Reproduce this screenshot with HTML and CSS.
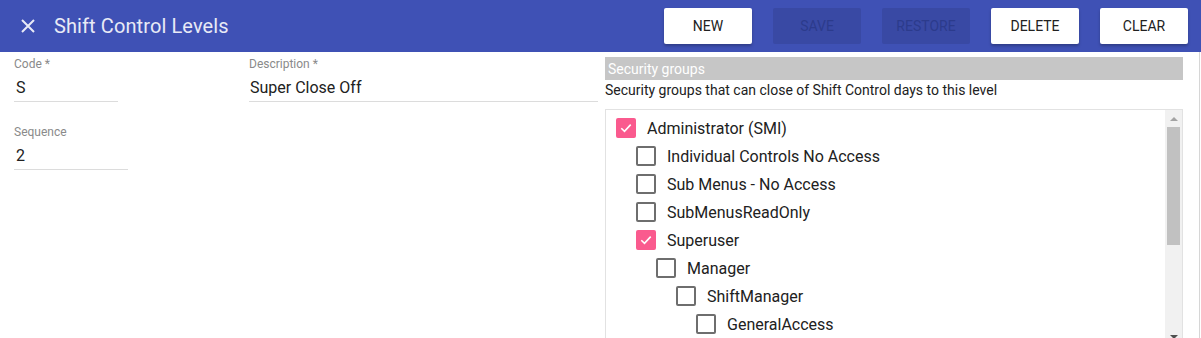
FILE: index.html
```html
<!DOCTYPE html>
<html lang="en">
<head>
<meta charset="utf-8">
<title>Shift Control Levels</title>
<link rel="stylesheet" href="styles.css">
</head>
<body>
<header class="toolbar">
  <button class="close-btn" aria-label="Close">
    <svg width="14" height="14" viewBox="0 0 14 14"><path d="M1 1L13 13M13 1L1 13" stroke="currentColor" stroke-width="2" fill="none"/></svg>
  </button>
  <h1 class="title">Shift Control Levels</h1>
  <div class="actions">
    <button class="btn">New</button>
    <button class="btn btn-disabled">Save</button>
    <button class="btn btn-disabled">Restore</button>
    <button class="btn">Delete</button>
    <button class="btn">Clear</button>
  </div>
</header>
<main class="content">
  <div class="col col-left">
    <div class="field field-code">
      <div class="label">Code *</div>
      <div class="value">S</div>
    </div>
    <div class="field field-seq">
      <div class="label">Sequence</div>
      <div class="value">2</div>
    </div>
  </div>
  <div class="col col-mid">
    <div class="field field-desc">
      <div class="label">Description *</div>
      <div class="value">Super Close Off</div>
    </div>
  </div>
  <section class="security">
    <div class="sec-bar">Security groups</div>
    <div class="sec-desc">Security groups that can close of Shift Control days to this level</div>
    <div class="sec-box">
      <ul class="tree">
        <li class="item lvl0"><span class="cb checked"><svg width="14" height="14" viewBox="0 0 14 14"><path d="M2.3 7.2L5.5 10.3L11.7 3.6" stroke="#fff" stroke-width="1.6" fill="none"/></svg></span>Administrator (SMI)</li>
        <li class="item lvl1"><span class="cb"></span>Individual Controls No Access</li>
        <li class="item lvl1"><span class="cb"></span>Sub Menus - No Access</li>
        <li class="item lvl1"><span class="cb"></span>SubMenusReadOnly</li>
        <li class="item lvl1"><span class="cb checked"><svg width="14" height="14" viewBox="0 0 14 14"><path d="M2.3 7.2L5.5 10.3L11.7 3.6" stroke="#fff" stroke-width="1.6" fill="none"/></svg></span>Superuser</li>
        <li class="item lvl2"><span class="cb"></span>Manager</li>
        <li class="item lvl3"><span class="cb"></span>ShiftManager</li>
        <li class="item lvl4"><span class="cb"></span>GeneralAccess</li>
      </ul>
      <div class="scrollbar">
        <div class="sb-arrow sb-up"></div>
        <div class="sb-track"><div class="sb-thumb"></div></div>
        <div class="sb-arrow sb-down"></div>
      </div>
    </div>
  </section>
</main>
</body>
</html>
```
FILE: styles.css
```css
* { box-sizing: border-box; }
html, body { margin: 0; padding: 0; }
body {
  font-family: Roboto, "Noto Sans", Arial, sans-serif;
  color: #212121;
  background: #fff;
  width: 1201px;
  height: 338px;
  overflow: hidden;
}
.toolbar {
  height: 52px;
  background: #3f51b5;
  display: flex;
  align-items: center;
  padding-left: 21px;
  padding-right: 13px;
}
.close-btn {
  background: none;
  border: 0;
  padding: 0;
  width: 14px;
  height: 14px;
  color: #e8eaf6;
  display: flex;
  cursor: pointer;
}
.title {
  margin: 0 0 0 19px;
  font-size: 20px;
  font-weight: 400;
  color: #e8eaf6;
  letter-spacing: 0.1px;
}
.actions {
  margin-left: auto;
  display: flex;
  gap: 21px;
}
.btn {
  width: 88px;
  height: 36px;
  border: 0;
  border-radius: 2px;
  background: #fff;
  color: #212121;
  font-family: Roboto, Arial, sans-serif;
  font-size: 14px;
  font-weight: 400;
  text-transform: uppercase;
  box-shadow: 0 2px 3px rgba(0,0,0,0.25);
  padding: 0;
}
.btn-disabled {
  background: #3949a4;
  color: #2c3b8c;
  box-shadow: none;
}
.content {
  width: 1200px;
  height: 286px;
  border-right: 1px solid #d6d6d6;
  display: grid;
  grid-template-columns: 235px 356px 578px;
  padding-left: 14px;
  align-items: start;
}
.field { display: flex; flex-direction: column; }
.label {
  font-size: 12px;
  line-height: 14px;
  color: #8a8a8a;
  margin-top: 5px;
}
.value {
  font-size: 16px;
  line-height: 24px;
  margin-top: 5px;
  padding-left: 2px;
  padding-bottom: 1px;
  border-bottom: 1px solid #dcdcdc;
}
.field-code { width: 104px; }
.field-seq { width: 114px; margin-top: 18px; }
.field-desc { width: 349px; }
.field-desc .value { padding-left: 1px; }
.security { padding-top: 5px; }
.sec-bar {
  height: 23px;
  background: #c6c6c6;
  color: #fff;
  font-size: 14px;
  line-height: 24px;
  padding-left: 3px;
}
.sec-desc {
  font-size: 14px;
  line-height: 20px;
  color: #212121;
}
.sec-box {
  margin-top: 9px;
  height: 237px;
  border: 1px solid #e2e2e2;
  display: flex;
  overflow: hidden;
}
.tree {
  list-style: none;
  margin: 0;
  padding: 4px 0 0 10px;
  flex: 1;
}
.item {
  height: 28px;
  display: flex;
  align-items: center;
  font-size: 16px;
  color: #212121;
  white-space: nowrap;
}
.lvl1 { padding-left: 20px; }
.lvl2 { padding-left: 40px; }
.lvl3 { padding-left: 60px; }
.lvl4 { padding-left: 80px; }
.cb {
  width: 20px;
  height: 20px;
  border: 2px solid #6e6e6e;
  border-radius: 2px;
  margin-right: 11px;
  flex: none;
  display: flex;
  align-items: center;
  justify-content: center;
}
.cb.checked {
  background: #fa5a8e;
  border-color: #fa5a8e;
}
.scrollbar {
  width: 17px;
  background: #f1f1f1;
  display: flex;
  flex-direction: column;
  flex: none;
}
.sb-arrow {
  height: 17px;
  display: flex;
  align-items: center;
  justify-content: center;
  flex: none;
}
.sb-arrow::before {
  content: "";
  width: 0;
  height: 0;
  border-left: 4px solid transparent;
  border-right: 4px solid transparent;
}
.sb-up::before { border-bottom: 4px solid #a3a3a3; }
.sb-down::before { border-top: 4px solid #505050; }
.sb-track { flex: 1; padding: 0 2px; }
.sb-thumb {
  height: 118px;
  background: #c1c1c1;
}
```
